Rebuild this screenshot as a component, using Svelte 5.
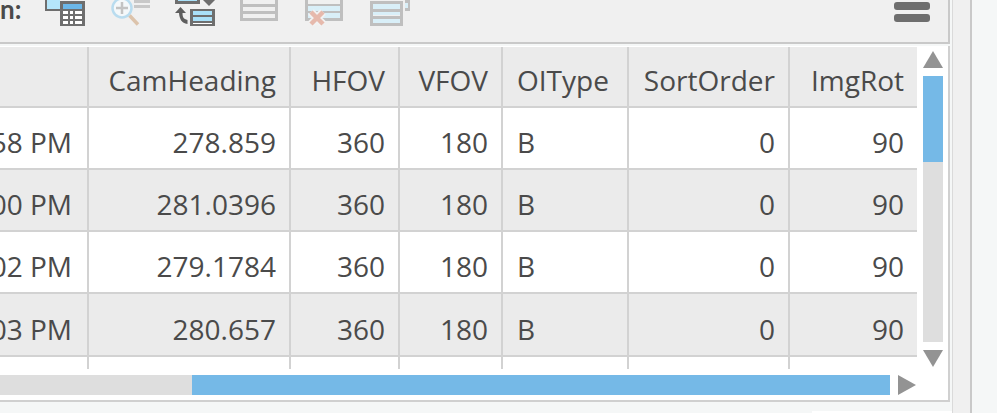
<script>
  const columns = [
    { label: '', width: 89, cls: 'end first' },
    { label: 'CamHeading', width: 202, cls: 'end' },
    { label: 'HFOV', width: 109, cls: 'end' },
    { label: 'VFOV', width: 103, cls: 'end' },
    { label: 'OIType', width: 126, cls: 'start' },
    { label: 'SortOrder', width: 161, cls: 'end' },
    { label: 'ImgRot', width: 127, cls: 'end' }
  ];
  const rows = [
    ['58 PM', '278.859', '360', '180', 'B', '0', '90'],
    ['00 PM', '281.0396', '360', '180', 'B', '0', '90'],
    ['02 PM', '279.1784', '360', '180', 'B', '0', '90'],
    ['03 PM', '280.657', '360', '180', 'B', '0', '90'],
    ['', '', '', '', '', '', '']
  ];
  const template = columns.map((c) => c.width + 'px').join(' ');
</script>

<div class="page">
  <div class="main">
    <header class="toolbar">
      <span class="label">n:</span>
      <svg class="i1" width="41" height="27" viewBox="0 0 41 27" shape-rendering="crispEdges">
        <path d="M0 0h15v10H0z" fill="#b5e6fb"/>
        <path d="M0 0h2v9h13v2H0z" fill="#6e6e6e"/>
        <path d="M15 1h25v25H15z" fill="#6e6e6e"/>
        <path d="M18 4h19v5H18z" fill="#6cb7e8"/>
        <path d="M18 11h5v3h-5zM25 11h3v3h-3zM30 11h7v3h-7zM18 16h5v3h-5zM25 16h3v3h-3zM30 16h7v3h-7zM18 21h5v3h-5zM25 21h3v3h-3zM30 21h7v3h-7z" fill="#fff"/>
      </svg>
      <svg class="i2" width="40" height="27" viewBox="0 0 40 27">
        <circle cx="12" cy="8" r="9.500" fill="#f4f8fa" stroke="#b9dcef" stroke-width="2.500"/>
        <path d="M6 8h12M12 2v12" stroke="#c3c3c3" stroke-width="2.500"/>
        <path d="M19.500 15.500l8.500 9" stroke="#dcc3ab" stroke-width="3.500"/>
        <path d="M24 0h16v3H24zM24 5h16v3H24z" fill="#c8c8c8"/>
      </svg>
      <svg class="i3" width="41" height="27" viewBox="0 0 41 27" shape-rendering="crispEdges">
        <path d="M0 0h25v4H0z" fill="#6e6e6e"/>
        <path d="M3 0h19v1H3z" fill="#a9e0f8"/>
        <path d="M28 0h12l-6 6z" fill="#6e6e6e" shape-rendering="auto"/>
        <path d="M15 9h25v17H15z" fill="#6e6e6e"/>
        <path d="M18 11h19v4H18zM18 17h19v4H18z" fill="#a9e0f8"/>
        <path d="M18 23h19v1H18z" fill="#fff"/>
        <path d="M0 13l5.500-6 5.500 6H7.500c0 4 1 6 5 7v4c-6-1-8-5-8.500-11z" fill="#5e5e5e" shape-rendering="auto"/>
      </svg>
      <svg class="i4" width="38" height="21" viewBox="0 0 38 21" shape-rendering="crispEdges">
        <path d="M0 0h3v21H0zM35 0h3v21h-3zM0 4h38v3H0zM0 11h38v3H0zM0 18h38v3H0z" fill="#bfbfbf"/>
      </svg>
      <svg class="i5" width="38" height="26" viewBox="0 0 38 26">
        <g shape-rendering="crispEdges">
          <path d="M3 6h32v5H3zM3 13h32v5H3z" fill="#d9eff8"/>
          <path d="M0 0h3v21H0zM35 0h3v21h-3zM0 4h38v2H0zM0 11h38v2H0zM0 18h38v3H0z" fill="#bfbfbf"/>
        </g>
        <path d="M6 12l12 12M18 12L6 24" stroke="#f2f2f2" stroke-width="8"/>
        <path d="M6 12l12 12M18 12L6 24" stroke="#e6b9ac" stroke-width="4.500"/>
      </svg>
      <svg class="i6" width="40" height="26" viewBox="0 0 40 26" shape-rendering="crispEdges">
        <path d="M3 4h27v5H3zM3 12h27v3H3zM3 19h27v4H3z" fill="#d9eff8"/>
        <path d="M0 1h33v3H0zM0 1h3v25H0zM30 1h3v25h-3zM0 9h33v3H0zM0 16h33v3H0zM0 23h33v3H0z" fill="#bfbfbf"/>
        <path d="M35 0h5v11h-5z" fill="#bfbfbf"/>
        <path d="M35 3h3v5h-3z" fill="#d9eff8"/>
      </svg>
      <span class="spacer"></span>
      <div class="menu"><i></i><i></i></div>
    </header>

    <section class="panel">
      <div class="table">
        <div class="row head" style:grid-template-columns={template}>
          {#each columns as c}
            <div class="cell {c.cls}">{c.label}</div>
          {/each}
        </div>
        {#each rows as row, r}
          <div class="row" class:alt={r % 2 === 1} style:grid-template-columns={template}>
            {#each row as v, i}
              <div class="cell {columns[i].cls}">{v}</div>
            {/each}
          </div>
        {/each}
      </div>
      <div class="vscroll">
        <span class="arrow up"></span>
        <div class="vtrack"><div class="vthumb"></div></div>
        <span class="arrow down"></span>
      </div>
      <div class="hscroll">
        <div class="htrack"><div class="hthumb"></div></div>
        <span class="arrow right"></span>
      </div>
    </section>
    <div class="foot"><div class="foot-box"></div></div>
  </div>
  <aside class="gutter"></aside>
  <div class="far"></div>
</div>

<style>
  :global(body) {
    margin: 0;
    background: #f5f7f7;
  }
  .page {
    display: flex;
    width: 997px;
    height: 413px;
    overflow: hidden;
    font-family: "Open Sans", "Noto Sans", sans-serif;
    color: #4a4a4a;
  }
  .main {
    width: 952px;
    flex: none;
    display: flex;
    flex-direction: column;
    background: #f5f7f7;
  }
  .toolbar {
    height: 42px;
    flex: none;
    display: flex;
    align-items: flex-start;
    background: #f0f0f0;
    border-bottom: 2px solid #c9c9c9;
    border-right: 2px solid #c9c9c9;
    margin-right: 2px;
  }
  .label {
    width: 45px;
    height: 26px;
    flex: none;
    font: 700 26px/1 "Lato", sans-serif;
    color: #4a4a4a;
    margin-top: -4px;
  }
  .toolbar svg { flex: none; display: block; }
  .i2 { margin-left: 24px; }
  .i3 { margin-left: 25px; }
  .i4 { margin-left: 24px; }
  .i5 { margin-left: 27px; }
  .i6 { margin-left: 27px; }
  .spacer { flex: 1; }
  .menu {
    display: flex;
    flex-direction: column;
    gap: 4px;
    margin: 2px 18px 0 0;
  }
  .menu i {
    display: block;
    width: 36px;
    height: 8px;
    border-radius: 3px;
    background: #6e6e6e;
  }
  .panel {
    margin-top: 2px;
    height: 354px;
    flex: none;
    display: grid;
    grid-template-columns: 917px 1fr;
    grid-template-rows: 323px 1fr;
    background: #fff;
    border-right: 2px solid #d0d0d0;
    border-bottom: 2px solid #d0d0d0;
    margin-right: 2px;
  }
  .table {
    overflow: hidden;
    padding-top: 1px;
  }
  .row {
    display: grid;
    height: 62.3px;
    box-sizing: border-box;
    border-bottom: 2px solid #d2d2d2;
    background: #fff;
  }
  .row.alt, .row.head { background: #ebebeb; }
  .row.head { height: 60.5px; }
  .cell {
    display: flex;
    align-items: center;
    overflow: hidden;
    white-space: nowrap;
    font-size: 28px;
    line-height: 1;
    padding: 8px 13px 0 14px;
    border-right: 2px solid #d2d2d2;
    min-width: 0;
  }
  .cell.first { padding-right: 15px; }
  .cell:last-child { border-right: none; }
  .end { justify-content: flex-end; }
  .start { justify-content: flex-start; }
  .vscroll {
    display: flex;
    flex-direction: column;
    align-items: center;
    padding: 5px 5px 0 0;
    width: 25px;
    margin-left: 6px;
    box-sizing: border-box;
    grid-row: 1 / 3;
    grid-column: 2;
  }
  .vtrack {
    width: 20px;
    height: 266px;
    margin: 8px 0;
    background: #dedede;
    flex: none;
  }
  .vthumb {
    height: 86px;
    background: #75b9e7;
  }
  .arrow {
    flex: none;
    width: 0;
    height: 0;
    display: block;
  }
  .up {
    border-left: 10px solid transparent;
    border-right: 10px solid transparent;
    border-bottom: 17px solid #939393;
  }
  .down {
    border-left: 10px solid transparent;
    border-right: 10px solid transparent;
    border-top: 17px solid #939393;
  }
  .right {
    border-top: 10px solid transparent;
    border-bottom: 10px solid transparent;
    border-left: 18px solid #939393;
    margin-left: 8px;
  }
  .hscroll {
    grid-row: 2;
    grid-column: 1;
    display: flex;
    align-items: flex-start;
    padding-top: 6px;
  }
  .htrack {
    width: 890px;
    height: 20px;
    background: #dedede;
    flex: none;
  }
  .hthumb {
    margin-left: 192px;
    width: 698px;
    height: 20px;
    background: #75b9e7;
  }
  .foot {
    flex: 1;
    display: flex;
    flex-direction: column;
    padding: 9px 0 0 812px;
  }
  .foot-box {
    flex: 1;
    background: #fff;
  }
  .gutter {
    width: 17px;
    flex: none;
    background: #f0f0f0;
    border-left: 1px solid #dadada;
    border-right: 2px solid #c9c9c9;
  }
  .far { flex: 1; background: #f5f7f7; }
</style>
